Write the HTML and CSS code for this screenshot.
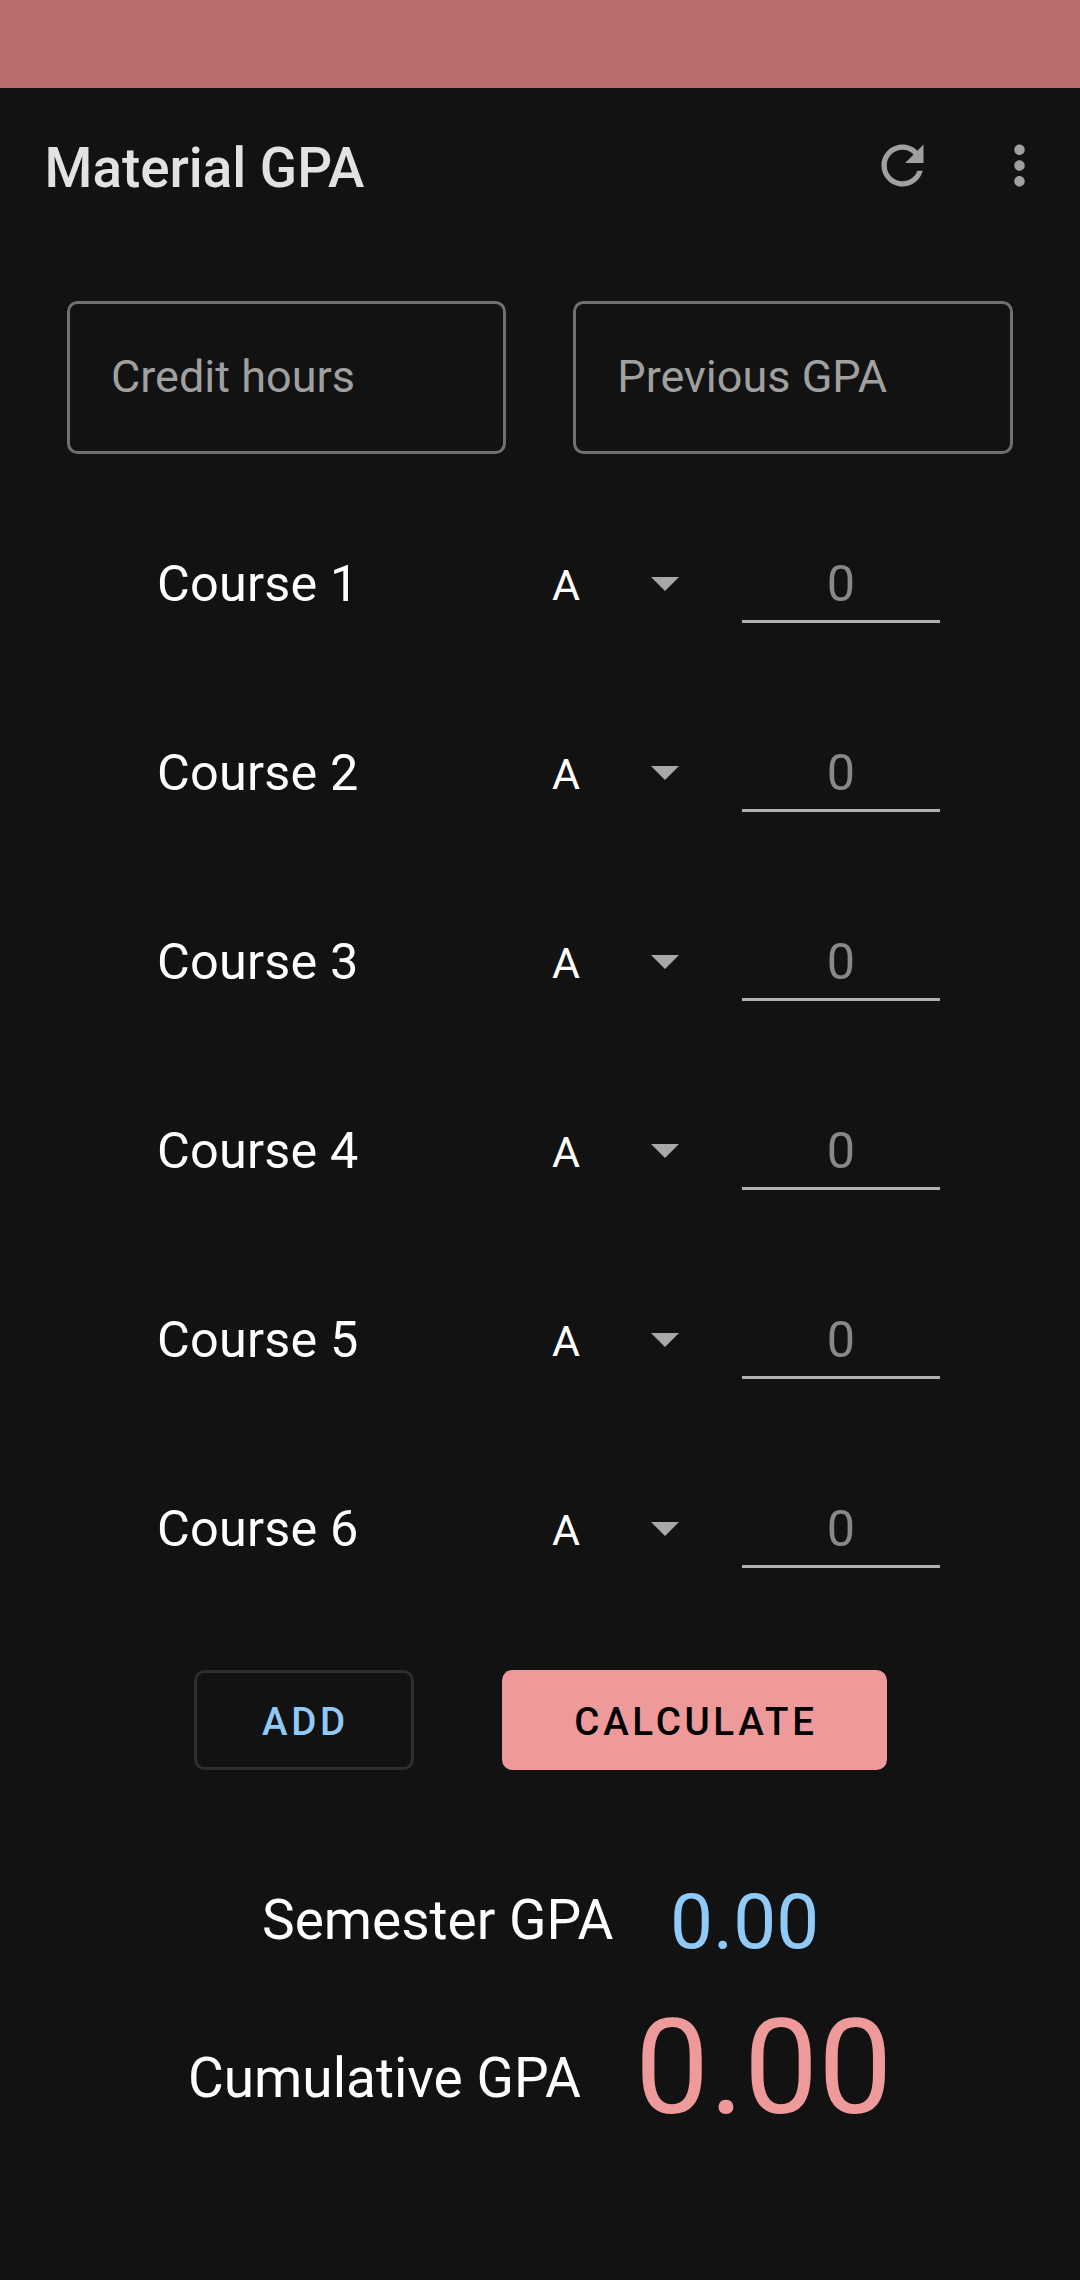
FILE: index.html
```html
<!DOCTYPE html>
<html lang="en">
<head>
<meta charset="utf-8">
<title>Material GPA</title>
<link rel="stylesheet" href="styles.css">
</head>
<body>
<div class="status"></div>
<header class="toolbar">
  <h1 class="title">Material GPA</h1>
  <div class="actions">
    <svg class="icon" viewBox="0 0 24 24"><path d="M17.65 6.35C16.2 4.9 14.21 4 12 4c-4.42 0-7.99 3.58-7.99 8s3.57 8 7.99 8c3.73 0 6.84-2.55 7.73-6h-2.08c-.82 2.33-3.04 4-5.65 4-3.31 0-6-2.69-6-6s2.69-6 6-6c1.66 0 3.14.69 4.22 1.78L13 11h7V4l-2.35 2.35z"/></svg>
    <svg class="icon" viewBox="0 0 24 24"><path d="M12 8c1.1 0 2-.9 2-2s-.9-2-2-2-2 .9-2 2 .9 2 2 2zm0 2c-1.1 0-2 .9-2 2s.9 2 2 2 2-.9 2-2-.9-2-2-2zm0 6c-1.1 0-2 .9-2 2s.9 2 2 2 2-.9 2-2-.9-2-2-2z"/></svg>
  </div>
</header>
<main>
  <section class="fields">
    <div class="field">Credit hours</div>
    <div class="field">Previous GPA</div>
  </section>
  <section class="courses">
    <div class="course"><span class="name">Course 1</span><span class="grade">A</span><span class="arrow"></span><span class="credits">0</span></div>
    <div class="course"><span class="name">Course 2</span><span class="grade">A</span><span class="arrow"></span><span class="credits">0</span></div>
    <div class="course"><span class="name">Course 3</span><span class="grade">A</span><span class="arrow"></span><span class="credits">0</span></div>
    <div class="course"><span class="name">Course 4</span><span class="grade">A</span><span class="arrow"></span><span class="credits">0</span></div>
    <div class="course"><span class="name">Course 5</span><span class="grade">A</span><span class="arrow"></span><span class="credits">0</span></div>
    <div class="course"><span class="name">Course 6</span><span class="grade">A</span><span class="arrow"></span><span class="credits">0</span></div>
  </section>
  <section class="buttons">
    <button class="btn btn-add">ADD</button>
    <button class="btn btn-calc">CALCULATE</button>
  </section>
  <section class="results">
    <div class="result semester"><span class="label">Semester GPA</span><span class="value">0.00</span></div>
    <div class="result cumulative"><span class="label">Cumulative GPA</span><span class="value">0.00</span></div>
  </section>
</main>
</body>
</html>
```

FILE: styles.css
```css
* { box-sizing: border-box; }
html, body { margin: 0; padding: 0; }
body {
  width: 1080px;
  height: 2280px;
  background: #121212;
  color: #fff;
  font-family: Roboto, "Liberation Sans", sans-serif;
  overflow: hidden;
}
.status { height: 88px; background: #ba6b6c; }
.toolbar {
  height: 154px;
  display: flex;
  align-items: center;
  justify-content: space-between;
  padding: 0 29.5px 0 44.5px;
}
.title {
  margin: 0;
  font-size: 54.75px;
  line-height: 62px;
  font-weight: 500;
  color: #e2e2e2;
  padding-top: 5px;
}
.actions { display: flex; gap: 54px; }
.icon { width: 63px; height: 63px; fill: #a0a0a0; display: block; }
.fields {
  display: flex;
  gap: 67px;
  margin: 59px 67.5px 0 67px;
}
.field {
  flex: 1;
  height: 153px;
  border: 3px solid #707070;
  border-radius: 10.5px;
  padding-left: 41px;
  font-size: 45px;
  line-height: 146px;
  color: #a0a0a0;
}
.courses { margin-top: 97px; padding-left: 157px; }
.course {
  height: 189px;
  display: flex;
  align-items: flex-start;
  font-size: 50.4px;
  line-height: 56px;
}
.name { width: 395px; padding-top: 5px; letter-spacing: 0.2px; }
.grade { width: 99px; font-size: 43px; padding-top: 6px; }
.arrow {
  width: 0;
  height: 0;
  margin-top: 26px;
  border-left: 14px solid transparent;
  border-right: 14px solid transparent;
  border-top: 14px solid #a8a8a8;
}
.credits {
  width: 198px;
  height: 72px;
  margin-left: 63px;
  padding-top: 5px;
  text-align: center;
  color: #888;
  border-bottom: 3px solid #b0b0b0;
}
.buttons {
  display: flex;
  gap: 88px;
  margin: -15px 0 0 194px;
}
.btn {
  height: 100px;
  border-radius: 10.5px;
  font-family: inherit;
  font-size: 38.5px;
  font-weight: 500;
  letter-spacing: 3.7px;
  padding: 3px 0 0 3px;
}
.btn-add {
  width: 220px;
  background: transparent;
  border: 3px solid #2e2e2e;
  color: #90caf9;
}
.btn-calc {
  width: 385px;
  background: #ef9a9a;
  border: 0;
  color: #000;
}
.results { margin-top: 106px; }
.result { display: flex; align-items: flex-start; }
.label { font-size: 55px; line-height: 60px; }
.semester { padding-left: 262px; }
.semester .label { width: 408px; margin-top: 14px; }
.semester .value { font-size: 76.5px; line-height: 92px; color: #90caf9; }
.cumulative { padding-left: 188px; margin-top: 26px; }
.cumulative .label { width: 447px; margin-top: 54px; }
.cumulative .value { font-size: 132px; line-height: 148px; color: #ef9a9a; }
```
